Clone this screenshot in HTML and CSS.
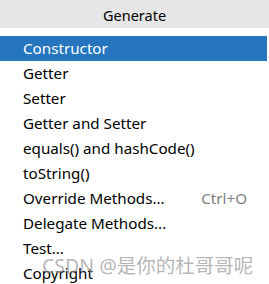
FILE: index.html
```html
<!DOCTYPE html>
<html lang="en">
<head>
    <meta charset="UTF-8">
    <title>Generate</title>
    <link rel="stylesheet" href="styles.css">
</head>
<body>
    <div class="popup">
        <div class="popup-header">Generate</div>
        <ul class="menu">
            <li class="menu-item selected">Constructor</li>
            <li class="menu-item">Getter</li>
            <li class="menu-item">Setter</li>
            <li class="menu-item">Getter and Setter</li>
            <li class="menu-item">equals() and hashCode()</li>
            <li class="menu-item">toString()</li>
            <li class="menu-item">Override Methods... <span class="shortcut">Ctrl+O</span></li>
            <li class="menu-item">Delegate Methods...</li>
            <li class="menu-item">Test...</li>
            <li class="menu-item">Copyright</li>
        </ul>
        <div class="watermark">CSDN @是你的杜哥哥呢</div>
    </div>
</body>
</html>
```

FILE: styles.css
```css
body {
    margin: 0;
    background-color: #fff;
    font-family: "Noto Sans", "Noto Sans CJK SC", sans-serif;
    color: #000;
}
.popup {
    position: relative;
    width: 269px;
    height: 284px;
    overflow: hidden;
}
.popup-header {
    background-color: #e6e6e6;
    height: 28px;
    line-height: 30px;
    text-align: center;
    font-size: 14.5px;
}
.menu {
    list-style: none;
    margin: 8px 0 0 0;
    padding: 0;
}
.menu-item {
    display: flex;
    justify-content: space-between;
    height: 25px;
    line-height: 25px;
    padding: 0 22px 0 23px;
    font-size: 15.2px;
}
.menu-item.selected {
    background-color: #2675bf;
    color: #fff;
    margin-right: 2px;
}
.shortcut {
    color: #808080;
}
.watermark {
    position: absolute;
    left: 42px;
    top: 250px;
    font-size: 19.5px;
    color: rgba(140, 140, 140, 0.65);
    white-space: nowrap;
}
```
